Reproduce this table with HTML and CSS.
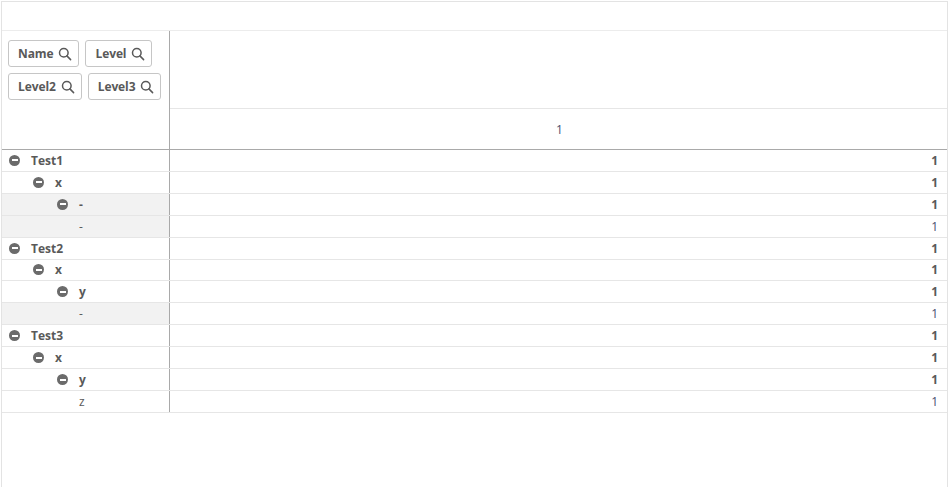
FILE: index.html
```html
<!DOCTYPE html>
<html>
<head>
<meta charset="utf-8">
<link rel="stylesheet" href="styles.css">
</head>
<body>
<div class="frame">
  <div class="titlebar"></div>
  <div class="pivot">
    <div class="head">
      <div class="corner">
        <div class="pills">
          <span class="pill">Name <svg class="mag" viewBox="0 0 14 14"><circle cx="5.8" cy="5.8" r="4.3"/><line x1="8.9" y1="8.9" x2="12.6" y2="12.6"/></svg></span>
          <span class="pill">Level <svg class="mag" viewBox="0 0 14 14"><circle cx="5.8" cy="5.8" r="4.3"/><line x1="8.9" y1="8.9" x2="12.6" y2="12.6"/></svg></span>
        </div>
        <div class="pills">
          <span class="pill">Level2 <svg class="mag" viewBox="0 0 14 14"><circle cx="5.8" cy="5.8" r="4.3"/><line x1="8.9" y1="8.9" x2="12.6" y2="12.6"/></svg></span>
          <span class="pill">Level3 <svg class="mag" viewBox="0 0 14 14"><circle cx="5.8" cy="5.8" r="4.3"/><line x1="8.9" y1="8.9" x2="12.6" y2="12.6"/></svg></span>
        </div>
      </div>
      <div class="colhead">
        <div class="colblank"></div>
        <div class="colcell">1</div>
      </div>
    </div>

    <div class="row"><div class="lbl l1"><span class="minus"></span><b>Test1</b></div><div class="val"><b>1</b></div></div>
    <div class="row"><div class="lbl l2"><span class="minus"></span><b>x</b></div><div class="val"><b>1</b></div></div>
    <div class="row"><div class="lbl l3 null"><span class="minus"></span><b>-</b></div><div class="val"><b>1</b></div></div>
    <div class="row"><div class="lbl l4 null"><span class="leaf">-</span></div><div class="val"><span class="num">1</span></div></div>
    <div class="row"><div class="lbl l1"><span class="minus"></span><b>Test2</b></div><div class="val"><b>1</b></div></div>
    <div class="row"><div class="lbl l2"><span class="minus"></span><b>x</b></div><div class="val"><b>1</b></div></div>
    <div class="row"><div class="lbl l3"><span class="minus"></span><b>y</b></div><div class="val"><b>1</b></div></div>
    <div class="row"><div class="lbl l4 null"><span class="leaf">-</span></div><div class="val"><span class="num">1</span></div></div>
    <div class="row"><div class="lbl l1"><span class="minus"></span><b>Test3</b></div><div class="val"><b>1</b></div></div>
    <div class="row"><div class="lbl l2"><span class="minus"></span><b>x</b></div><div class="val"><b>1</b></div></div>
    <div class="row"><div class="lbl l3"><span class="minus"></span><b>y</b></div><div class="val"><b>1</b></div></div>
    <div class="row"><div class="lbl l4"><span class="leaf">z</span></div><div class="val"><span class="num">1</span></div></div>
  </div>
</div>
</body>
</html>
```
FILE: styles.css
```css
html, body {
  margin: 0;
  padding: 0;
  background: #ffffff;
}
body {
  font-family: "Open Sans", "Liberation Sans", sans-serif;
  font-size: 12px;
  color: #595959;
}
.frame {
  margin: 1px 0 0 1px;
  width: 947px;
  height: 500px;
  box-sizing: border-box;
  border: 1px solid #e3e3e3;
  display: flex;
  flex-direction: column;
}
.titlebar {
  height: 28px;
  border-bottom: 1px solid #ececec;
}
.pivot {
  display: flex;
  flex-direction: column;
}
.head {
  display: grid;
  grid-template-columns: 168px 1fr;
  border-bottom: 1px solid #a9a9a9;
  height: 119px;
  box-sizing: border-box;
}
.corner {
  border-right: 1px solid #a9a9a9;
  padding: 9px 0 0 6px;
  display: flex;
  flex-direction: column;
  gap: 6px;
}
.pills {
  display: flex;
  gap: 6px;
}
.pill {
  display: inline-flex;
  align-items: center;
  height: 27px;
  box-sizing: border-box;
  border: 1px solid #c6c6c6;
  border-radius: 3px;
  padding: 0 6px 0 9px;
  font-weight: 700;
  font-size: 12px;
  letter-spacing: -0.1px;
  color: #595959;
  gap: 5px;
}
.mag {
  width: 14px;
  height: 14px;
  fill: none;
  stroke: #595959;
  stroke-width: 1.5;
  stroke-linecap: round;
}
.colhead {
  display: flex;
  flex-direction: column;
}
.colblank {
  height: 77px;
  border-bottom: 1px solid #e6e6e6;
}
.colcell {
  flex: 1;
  display: flex;
  align-items: center;
  justify-content: center;
  padding-left: 2px;
  color: #4a5070;
  font-size: 12px;
}
.row {
  display: grid;
  grid-template-columns: 168px 1fr;
  height: 21.92px;
  box-sizing: border-box;
  border-bottom: 1px solid #e6e6e6;
}
.lbl {
  border-right: 1px solid #a9a9a9;
  display: flex;
  align-items: center;
  font-size: 12px;
}
.lbl b {
  font-weight: 700;
  color: #595959;
}
.lbl.null {
  background: #f2f2f2;
}
.l1 { padding-left: 7px; }
.l2 { padding-left: 31px; }
.l3 { padding-left: 55px; }
.l4 { padding-left: 77px; }
.minus {
  width: 11px;
  height: 11px;
  border-radius: 50%;
  background: #6b6b6b;
  position: relative;
  margin-right: 11px;
  flex: none;
}
.minus::after {
  content: "";
  position: absolute;
  left: 2.5px;
  right: 2.5px;
  top: 4.5px;
  height: 2px;
  background: #ffffff;
}
.leaf {
  color: #595959;
  font-weight: 400;
}
.val {
  display: flex;
  align-items: center;
  justify-content: flex-end;
  padding-right: 9px;
  font-size: 12px;
}
.val b {
  font-weight: 700;
  color: #595959;
}
.num {
  color: #4a5070;
}
```
